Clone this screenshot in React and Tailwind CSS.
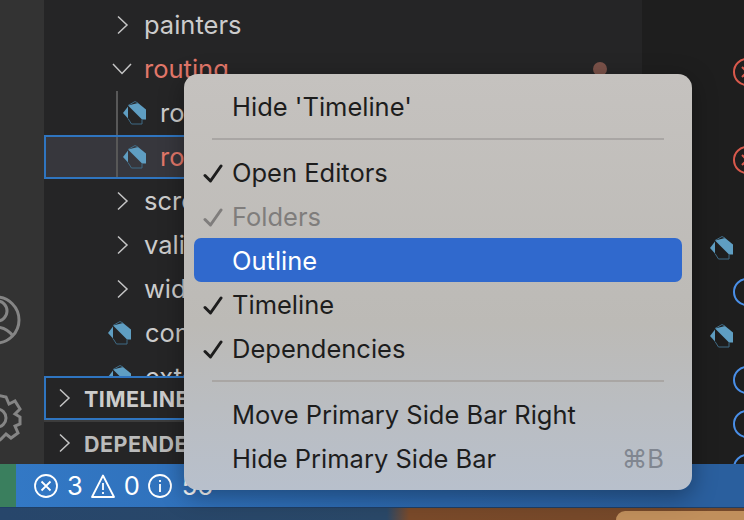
import React from 'react';

const font = { fontFamily: 'Inter' };

const DartIcon = ({ className = '' }) => (
  <svg viewBox="0 0 23 24" className={`w-[23px] h-[24px] shrink-0 ${className}`}>
    <path d="M5 4.5 L15 2 L23 8.5 L23 18.5 L19 18.5 Z" fill="#5f9ec2" />
    <path d="M0 12 L5 5.5 L5 17.5 Z" fill="#5f9ec2" />
    <path d="M5 4.5 L12 0.5 L15 2 M5 17.5 L8.5 23 L19 23 L19 18.5" fill="none" stroke="#3f6b85" strokeWidth="1" />
  </svg>
);

const Chevron = ({ open = false }) => (
  <svg viewBox="0 0 28 28" className="w-[28px] h-[28px] shrink-0" fill="none" stroke="#c5c5c5" strokeWidth="1.5">
    <path d={open ? 'M5 9 L14 18.5 L23 9' : 'M9 5.5 L18 14 L9 22.5'} />
  </svg>
);

const IndentGuide = () => <div className="w-[2px] h-full bg-[#585858] ml-[72px] mr-[5px] shrink-0" />;

const Row = ({ children, selected = false }) => (
  <div
    className={`h-[44px] shrink-0 flex items-center whitespace-nowrap ${
      selected ? 'bg-[#37373d] outline-2 -outline-offset-2 outline-[#2f75c0]' : ''
    }`}
  >
    {children}
  </div>
);

const Folder = ({ name, open = false, modified = false }) => (
  <Row>
    <div className={`flex items-center w-full pr-[35px] ${open ? 'pl-[64px]' : 'pl-[65px]'}`}>
      <Chevron open={open} />
      <span className={`pt-[1px] ${modified ? 'text-[#e2776a]' : 'text-[#cccccc]'} ${open ? 'ml-[8px]' : 'ml-[7px]'}`}>{name}</span>
      {modified && <span className="ml-auto w-[14px] h-[14px] rounded-full bg-[#7b5249]" />}
    </div>
  </Row>
);

const FileRow = ({ name, nested = false, selected = false, modified = false }) => (
  <Row selected={selected}>
    {nested && <IndentGuide />}
    <DartIcon className={nested ? '' : 'ml-[64px]'} />
    <span className={`ml-[14px] pt-[1px] ${modified ? 'text-[#e2776a]' : 'text-[#cccccc]'}`}>{name}</span>
  </Row>
);

const SectionHeader = ({ label, focused = false, dim = false }) => (
  <div
    className={`h-[44px] shrink-0 flex items-center pl-[7px] ${
      focused ? 'outline-2 -outline-offset-2 outline-[#2f75c0]' : 'border-t-2 border-[#3c3c3c]'
    }`}
  >
    <Chevron />
    <span className={`ml-[5px] pt-[2px] font-bold text-[21.5px] tracking-[0.5px] ${dim ? 'text-[#bbbbbb]' : 'text-[#cccccc]'}`}>{label}</span>
  </div>
);

const MenuItem = ({ label, checked = false, disabled = false, active = false, shortcut }) => (
  <div
    className={`h-[44px] flex items-center rounded-[7px] pr-[18px] ${
      active ? 'bg-[#3069cd] text-white' : disabled ? 'text-[#7f7d7c]' : 'text-[#1d1d1d]'
    }`}
  >
    <div className="w-[38px] pl-[9px] shrink-0">
      {checked && (
        <svg viewBox="0 0 20 19" className="w-[20px] h-[19px] mt-[2px]" fill="none" stroke="currentColor" strokeWidth="3" strokeLinecap="round" strokeLinejoin="round">
          <path d="M2 11.5 L7.5 17 L18 2" />
        </svg>
      )}
    </div>
    <span className="pt-[2px]">{label}</span>
    {shortcut && <span className="ml-auto pt-[2px] text-[#808690]">{shortcut}</span>}
  </div>
);

const Separator = () => (
  <div className="h-[22px] flex items-center px-[18px]">
    <div className="w-full h-[2px] bg-[#a9a6a4]" />
  </div>
);

const GutterCircle = ({ color = '#4a8fe8', cross = false }) => (
  <svg viewBox="0 0 28 28" className="w-[28px] h-[28px] shrink-0">
    <circle cx="14" cy="14" r="13" fill="none" stroke={color} strokeWidth="2" />
    {cross && <path d="M9 9 L19 19 M19 9 L9 19" stroke={color} strokeWidth="2" />}
  </svg>
);

const gutter = [
  <GutterCircle color="#d9594c" cross />,
  null,
  <GutterCircle color="#d9594c" cross />,
  null,
  <DartIcon className="-ml-[23px]" />,
  <GutterCircle />,
  <DartIcon className="-ml-[23px]" />,
  <GutterCircle />,
  <GutterCircle />,
  <GutterCircle />,
];

export default function App() {
  return (
    <div className="relative w-[744px] h-[520px] overflow-hidden flex flex-col bg-[#27466b] text-[25.5px]" style={font}>
      <div className="h-[464px] flex shrink-0">
        {/* activity bar */}
        <div className="w-[44px] bg-[#333333] flex flex-col justify-end shrink-0">
          <svg viewBox="0 0 44 170" className="w-[44px] h-[170px]" fill="none" stroke="#858585" strokeWidth="3">
            <circle cx="-4" cy="26" r="23" />
            <circle cx="-3" cy="17" r="10" />
            <path d="M-20 43 C-12 30 4 30 13 42" />
            <path d="M-3 101 L6 103 L9 110 L15 107 L20 115 L15 120 L20 123 L20 130 L15 132 L18 139 L11 144 L6 140 L1 145 L-3 148" />
            <circle cx="-3" cy="124" r="9" />
          </svg>
        </div>

        {/* side bar */}
        <div className="w-[598px] bg-[#252526] flex flex-col shrink-0">
          <div className="flex-1 min-h-0 overflow-hidden flex flex-col pt-[3px]">
            <Folder name="painters" />
            <Folder name="routing" open modified />
            <FileRow name="route.dart" nested />
            <FileRow name="router.dart" nested selected modified />
            <Folder name="scrolling" />
            <Folder name="validators" />
            <Folder name="widgets" />
            <FileRow name="constants.dart" />
            <FileRow name="extensions.dart" />
          </div>
          <SectionHeader label="TIMELINE" focused />
          <SectionHeader label="DEPENDENCIES" dim />
        </div>

        {/* editor gutter */}
        <div className="flex-1 bg-[#1e1e1e] overflow-hidden flex flex-col pt-[50px] pl-[91px]">
          {gutter.map((icon, i) => (
            <div key={i} className="h-[44px] shrink-0 flex items-center">
              {icon}
            </div>
          ))}
        </div>
      </div>

      {/* status bar */}
      <div className="h-[44px] shrink-0 flex items-center bg-[linear-gradient(90deg,#3379c6_0%,#2d6bb3_45%,#2a5f9e_90%)] text-white border-b border-[#1f3f66]">
        <div className="w-[16px] h-full bg-[#3a7f5e] shrink-0" />
        <svg viewBox="0 0 24 24" className="w-[24px] h-[24px] ml-[18px]" fill="none" stroke="white" strokeWidth="1.8">
          <circle cx="12" cy="12" r="11" />
          <path d="M7.5 7.5 L16.5 16.5 M16.5 7.5 L7.5 16.5" />
        </svg>
        <span className="ml-[9px] pt-[1px]">3</span>
        <svg viewBox="0 0 24 24" className="w-[24px] h-[24px] ml-[8px]" fill="none" stroke="white" strokeWidth="1.8">
          <path d="M12 1.5 L23 23 L1 23 Z" strokeLinejoin="round" />
          <path d="M12 9 L12 16 M12 18 L12 20" />
        </svg>
        <span className="ml-[9px] pt-[1px]">0</span>
        <svg viewBox="0 0 24 24" className="w-[24px] h-[24px] ml-[8px]" fill="none" stroke="white" strokeWidth="1.8">
          <circle cx="12" cy="12" r="11" />
          <path d="M12 10 L12 18 M12 6 L12 8" />
        </svg>
        <span className="ml-[10px] pt-[1px]">56</span>
      </div>

      {/* desktop wallpaper below the window */}
      <div className="flex-1 flex bg-[linear-gradient(90deg,#27466b_0%,#2a4868_52%,#7a4a2a_55%,#74482a_100%)]">
        <div className="ml-auto mt-[3px] w-[128px] rounded-tl-[24px] bg-[#c08f5c]" />
      </div>

      {/* context menu */}
      <div className="absolute left-[184px] top-[74px] w-[508px] h-[416px] p-[10px] rounded-[14px] bg-[linear-gradient(180deg,#c5c2bf_0%,#bcbab6_60%,#b8c0cc_100%)] shadow-[0_6px_24px_rgba(0,0,0,0.35)]">
        <MenuItem label="Hide 'Timeline'" />
        <Separator />
        <MenuItem label="Open Editors" checked />
        <MenuItem label="Folders" checked disabled />
        <MenuItem label="Outline" active />
        <MenuItem label="Timeline" checked />
        <MenuItem label="Dependencies" checked />
        <Separator />
        <MenuItem label="Move Primary Side Bar Right" />
        <MenuItem label="Hide Primary Side Bar" shortcut="⌘B" />
      </div>
    </div>
  );
}
